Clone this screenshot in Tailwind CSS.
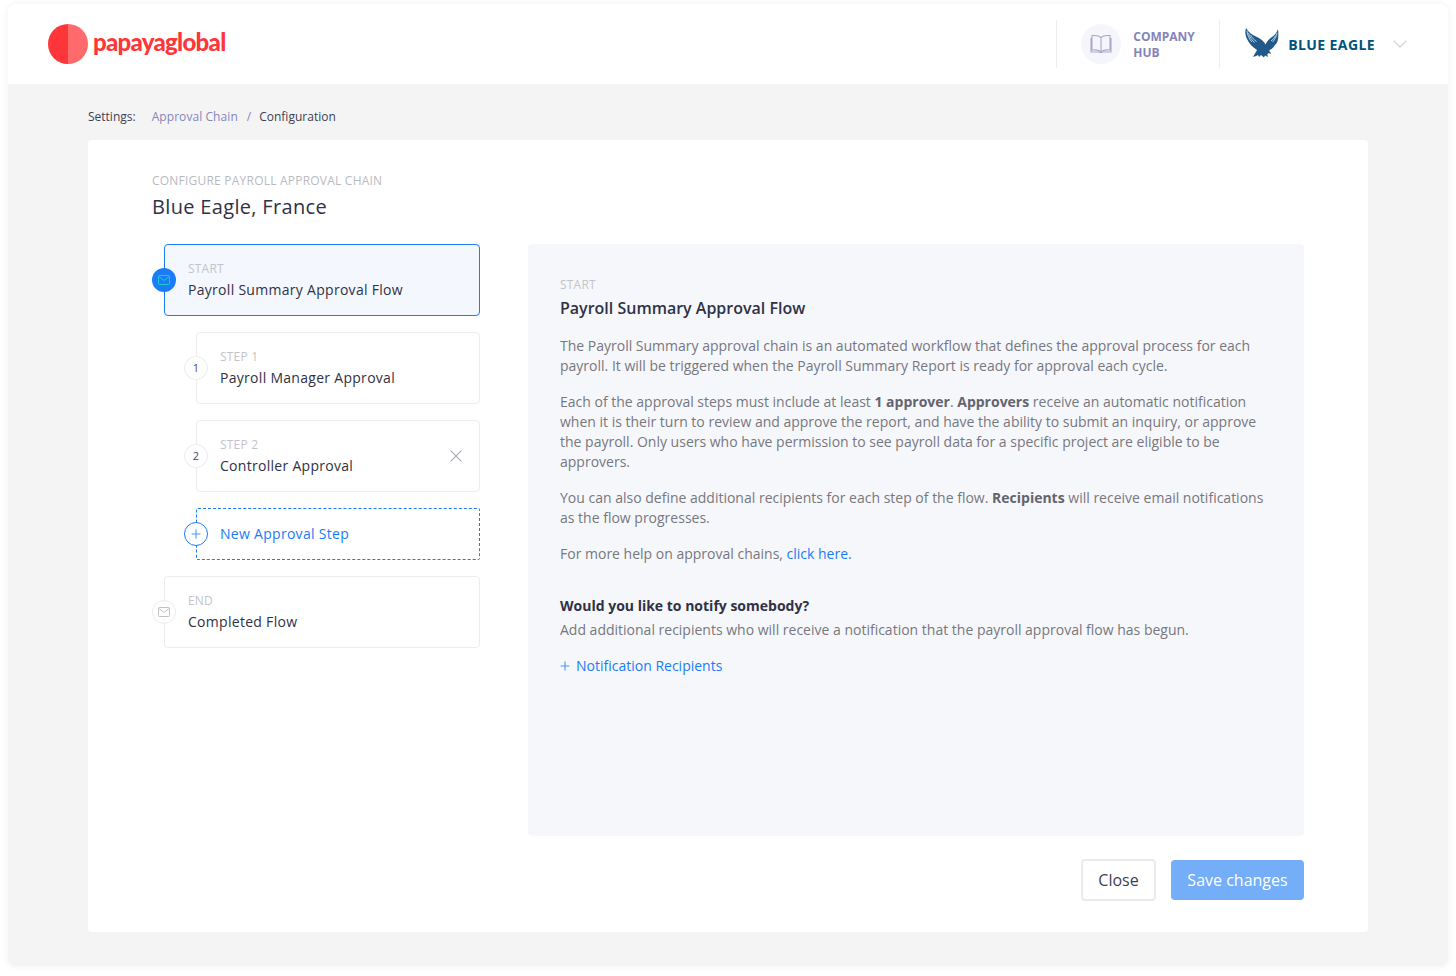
<!DOCTYPE html>
<html><head><meta charset="utf-8"><script src="https://cdn.jsdelivr.net/npm/@tailwindcss/browser@4"></script></head>
<body class="bg-white font-['Open_Sans',sans-serif]">
<div class="w-[1456px] h-[976px] pl-2 pr-2 pt-1 overflow-hidden">
<div class="w-[1440px] h-[962px] rounded-lg overflow-hidden bg-[#f4f4f5] shadow-[0_0_8px_rgba(0,0,0,0.06)]">
  <header class="h-20 bg-white flex items-center pl-10 pr-[41px]">
    <svg class="w-10 h-10 shrink-0" viewBox="0 0 40 40"><path d="M20 0a20 20 0 0 0 0 40z" fill="#ff3639"/><path d="M20 0a20 20 0 0 1 0 40z" fill="#ff6b6d"/></svg>
    <span class="ml-[5px] -mt-[5px] text-[24px] leading-none font-['Lato',sans-serif] font-black tracking-[-0.72px] text-[#ff3639]">papayaglobal</span>
    <div class="ml-auto h-12 border-l border-[#eeeef0] pl-6 flex items-center">
      <div class="w-10 h-10 rounded-full bg-[#f5f6fb] flex items-center justify-center">
        <svg class="w-[22px] h-[20px]" viewBox="0 0 22 20" fill="none" stroke="#a9a7cf" stroke-width="1.1"><path d="M11 3.500C9 1.600 5.500 1.200 2 1.600V16c3.500-.4 7 0 9 1.600 2-1.600 5.500-2 9-1.600V1.600C16.500 1.200 13 1.600 11 3.500zM11 3.500V17.600M1 4v14h8c.6.8 3.400.8 4 0h8V4"/></svg>
      </div>
      <div class="ml-3 mt-[2px] w-[86px] text-xs leading-4 font-bold text-[#8583b8]">COMPANY<br>HUB</div>
    </div>
    <div class="h-12 border-l border-[#eeeef0] pl-[25px] flex items-center">
      <svg class="w-[34px] h-[32px]" viewBox="0 0 34 32"><path fill="#215a8a" d="M1 0C0 3 0 7 2 11c2 4 5 8 10 11-1 2-3 5-4 7 2-.5 3-1 5-2l1 2 2-2 3 2.500 1-2 3 1.500c-.5-1.500-1-2.500 0-3.500.5-.6 2.500.5 3 .5 0-1-1-2.500-2-3 2-1.500 4-3 5.500-5.500C33 15 34 10 33 1c-1 3-3 6-6 8-3 2-5 4-6.500 7.500C19 13 16 11 12 9 7 7 3 4 1 0z"/><path fill="none" stroke="#fff" stroke-width=".7" d="M2 3c.5 4 2 8 5 11M3.500 5c1 3.500 3 7 6 9.500M5.500 7c1.500 2.500 3.500 5 6 6.500M32 5c-.5 3-2 6.500-4.500 9M30.500 7.500c-1 2-2.500 4-4.500 5.500"/><path fill="#fff" d="M25 21.500c1 .2 2.500 1 3 2.500l-1.500 .5c-1-.5-2-1.500-1.500-3z"/></svg>
      <span class="ml-[9px] mt-[2px] text-sm font-bold tracking-[.4px] text-[#00537f] leading-none">BLUE EAGLE</span>
      <svg class="ml-[18px] w-[14px] h-[8px]" viewBox="0 0 14 8" fill="none" stroke="#d9d9dc" stroke-width="1.500"><path d="M.7.7 7 7 13.300.7"/></svg>
    </div>
  </header>
  <main class="px-20 pt-[22px]">
    <nav class="h-[22px] flex items-center text-xs text-[#3d3f52]">
      <span>Settings:</span><span class="ml-4 tracking-[.07px] text-[#8785ba]">Approval Chain</span><span class="ml-[9px] mr-2 text-[#8785ba]">/</span><span>Configuration</span>
    </nav>
    <section class="mt-3 h-[792px] bg-white rounded pt-8 px-16">
      <div class="text-xs tracking-[.22px] leading-[18px] text-[#b9bac1]">CONFIGURE PAYROLL APPROVAL CHAIN</div>
      <h1 class="mt-[3px] text-xl tracking-[.33px] leading-7 font-normal text-[#2f3245]">Blue Eagle, France</h1>
      <div class="mt-[23px] flex">
        <div class="ml-3 w-[316px] shrink-0 flex flex-col gap-4">
          <div class="relative h-[72px] rounded border border-[#1a7cf7] bg-[#f4f7fe] pl-[23px] pt-[15px]">
            <div class="absolute -left-[13px] top-[23px] w-6 h-6 rounded-full bg-[#1a7cf7] flex items-center justify-center">
              <svg class="w-3 h-[10px]" viewBox="0 0 12 10" fill="none" stroke="#20d0c4" stroke-width="0.900"><rect x=".5" y=".5" width="11" height="9" rx="1"/><path d="M.8 1.500 6 5.500l5.200-4"/></svg>
            </div>
            <div class="text-xs tracking-[.2px] leading-[18px] text-[#c3c4c9]">START</div>
            <div class="mt-[2px] text-sm tracking-[.29px] leading-5 text-[#2f3245]">Payroll Summary Approval Flow</div>
          </div>
          <div class="relative ml-8 h-[72px] rounded border border-[#ececee] bg-white pl-[23px] pt-[15px]">
            <div class="absolute -left-[13px] top-[23px] w-6 h-6 rounded-full border border-[#ececee] bg-white flex items-center justify-center text-[11px] text-[#4a4c5e]">1</div>
            <div class="text-xs tracking-[.2px] leading-[18px] text-[#c3c4c9]">STEP 1</div>
            <div class="mt-[2px] text-sm tracking-[.29px] leading-5 text-[#2f3245]">Payroll Manager Approval</div>
          </div>
          <div class="relative ml-8 h-[72px] rounded border border-[#ececee] bg-white pl-[23px] pt-[15px]">
            <div class="absolute -left-[13px] top-[23px] w-6 h-6 rounded-full border border-[#ececee] bg-white flex items-center justify-center text-[11px] text-[#4a4c5e]">2</div>
            <div class="text-xs tracking-[.2px] leading-[18px] text-[#c3c4c9]">STEP 2</div>
            <div class="mt-[2px] text-sm tracking-[.29px] leading-5 text-[#2f3245]">Controller Approval</div>
            <svg class="absolute right-[17px] top-[29px] w-3 h-3" viewBox="0 0 12 12" stroke="#a9aab1" stroke-width="1.100"><path d="M.6.600 11.400 11.400M11.400.600 .6 11.400"/></svg>
          </div>
          <div class="relative ml-8 h-[52px] rounded-[2px] border border-dashed border-[#1a7cf7] bg-white pl-[23px] flex items-center">
            <div class="absolute -left-[13px] top-[13px] w-6 h-6 rounded-full border border-[#1a7cf7] bg-white flex items-center justify-center">
              <svg class="w-[10px] h-[10px]" viewBox="0 0 10 10" stroke="#4c97f8" stroke-width="1.100"><path d="M5 .5v9M.5 5h9"/></svg>
            </div>
            <div class="text-sm tracking-[.29px] leading-5 text-[#1a7cf7]">New Approval Step</div>
          </div>
          <div class="relative h-[72px] rounded border border-[#ececee] bg-white pl-[23px] pt-[15px]">
            <div class="absolute -left-[13px] top-[23px] w-6 h-6 rounded-full border border-[#ececee] bg-white flex items-center justify-center">
              <svg class="w-3 h-[10px]" viewBox="0 0 12 10" fill="none" stroke="#b9bac1" stroke-width="0.900"><rect x=".5" y=".5" width="11" height="9" rx="1"/><path d="M.8 1.500 6 5.500l5.200-4"/></svg>
            </div>
            <div class="text-xs tracking-[.2px] leading-[18px] text-[#c3c4c9]">END</div>
            <div class="mt-[2px] text-sm tracking-[.29px] leading-5 text-[#2f3245]">Completed Flow</div>
          </div>
        </div>
        <div class="ml-12 w-[776px] h-[592px] rounded bg-[#f6f7fb] pt-[32px] px-8">
          <div class="text-xs tracking-[.2px] leading-[18px] text-[#c3c4c9]">START</div>
          <h2 class="mt-[2px] text-base leading-6 font-semibold text-[#2f3245]">Payroll Summary Approval Flow</h2>
          <div class="mt-4 w-[712px] text-sm leading-5 text-[#76777f] flex flex-col gap-4">
            <p>The Payroll Summary approval chain is an automated workflow that defines the approval process for each<br>payroll. It will be triggered when the Payroll Summary Report is ready for approval each cycle.</p>
            <p>Each of the approval steps must include at least <b class="font-bold text-[#63646e]">1 approver</b>. <b class="font-bold text-[#63646e]">Approvers</b> receive an automatic notification<br>when it is their turn to review and approve the report, and have the ability to submit an inquiry, or approve<br>the payroll. Only users who have permission to see payroll data for a specific project are eligible to be<br>approvers.</p>
            <p>You can also define additional recipients for each step of the flow. <b class="font-bold text-[#63646e]">Recipients</b> will receive email notifications<br>as the flow progresses.</p>
            <p>For more help on approval chains, <span class="text-[#1a7cf7]">click here.</span></p>
          </div>
          <div class="mt-[32px] text-sm leading-5 font-bold text-[#2f3245]">Would you like to notify somebody?</div>
          <div class="mt-1 text-sm leading-5 text-[#76777f]">Add additional recipients who will receive a notification that the payroll approval flow has begun.</div>
          <div class="mt-4 flex items-center text-sm leading-5 text-[#1a7cf7]">
            <svg class="w-[10px] h-[10px] mr-[6px]" viewBox="0 0 10 10" stroke="#4c97f8" stroke-width="1.100"><path d="M5 .5v9M.5 5h9"/></svg>Notification Recipients
          </div>
        </div>
      </div>
      <div class="mt-6 flex justify-end gap-[15px]">
        <div class="w-[75px] h-[42px] -mt-px rounded border-2 border-[#ebebed] bg-white flex items-center justify-center text-base text-[#3d3f52]">Close</div>
        <div class="w-[133px] h-10 rounded bg-[#74adf8] flex items-center justify-center text-base text-white">Save changes</div>
      </div>
    </section>
  </main>
</div>
</div>
</body></html>
